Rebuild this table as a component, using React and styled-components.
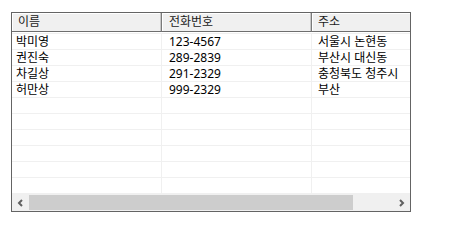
import React from "react";
import styled, { createGlobalStyle } from "styled-components";

const Global = createGlobalStyle`
  html, body { margin: 0; padding: 0; background: #ffffff; }
  body { font-family: "Noto Sans", "Noto Sans CJK KR", sans-serif; }
`;

const Page = styled.div`
  padding: 12px 0 0 11px;
`;

const ListView = styled.div`
  width: 400px;
  height: 200px;
  box-sizing: border-box;
  border: 1px solid #646464;
  background: #ffffff;
  display: flex;
  flex-direction: column;
  overflow: hidden;
`;

const Viewport = styled.div`
  flex: 1;
  overflow: hidden;
  display: flex;
  flex-direction: column;
`;

const HeaderRow = styled.div`
  width: 450px;
  display: grid;
  grid-template-columns: 150px 150px 150px;
  flex: none;
`;

const Body = styled.div`
  width: 450px;
  display: grid;
  grid-template-columns: 150px 150px 150px;
  padding-top: 1px;
`;

const HeaderCell = styled.div`
  height: 19px;
  box-sizing: border-box;
  background: #f0f0f0;
  border-bottom: 1px solid #6e6e6e;
  border-right: 1px solid #7a7a7a;
  box-shadow: inset -1px 0 0 #c8c8c8, inset 1px 1px 0 #ffffff;
  padding-left: ${(p) => p.$pad}px;
  font-size: 12px;
  line-height: 18px;
  color: #1a1a1a;
  white-space: nowrap;
`;

const Cell = styled.div`
  height: ${(p) => (p.$first ? 17 : 16)}px;
  box-sizing: border-box;
  border-top: ${(p) => (p.$first ? "1px solid #f0f0f0" : "none")};
  border-bottom: 1px solid #f0f0f0;
  border-right: 1px solid #f0f0f0;
  padding-left: ${(p) => p.$pad}px;
  font-size: 12px;
  line-height: 15px;
  color: #000000;
  white-space: nowrap;
  overflow: hidden;
`;

const ScrollBar = styled.div`
  height: 17px;
  flex: none;
  background: #f0f0f0;
  display: flex;
  align-items: stretch;
`;

const Arrow = styled.div`
  width: 17px;
  display: flex;
  align-items: center;
  justify-content: center;
`;

const Track = styled.div`
  flex: 1;
  display: flex;
  padding: 1px 0;
`;

const Thumb = styled.div`
  background: #cdcdcd;
  height: 100%;
`;

const Chevron = ({ dir }) => (
  <svg width="7" height="8" viewBox="0 0 7 8">
    <polyline
      points={dir === "left" ? "5,1 2,4 5,7" : "2,1 5,4 2,7"}
      fill="none"
      stroke="#606060"
      strokeWidth="2"
    />
  </svg>
);

const columns = [
  { title: "이름", hpad: 6, pad: 4 },
  { title: "전화번호", hpad: 7, pad: 7 },
  { title: "주소", hpad: 6, pad: 6 },
];

const rows = [
  ["박미영", "123-4567", "서울시 논현동"],
  ["권진숙", "289-2839", "부산시 대신동"],
  ["차길상", "291-2329", "충청북도 청주시"],
  ["허만상", "999-2329", "부산"],
  ["", "", ""],
  ["", "", ""],
  ["", "", ""],
  ["", "", ""],
  ["", "", ""],
  ["", "", ""],
  ["", "", ""],
];

export default function App() {
  return (
    <Page>
      <Global />
      <ListView>
        <Viewport>
          <HeaderRow>
            {columns.map((c) => (
              <HeaderCell key={c.title} $pad={c.hpad}>
                {c.title}
              </HeaderCell>
            ))}
          </HeaderRow>
          <Body>
            {rows.map((r, i) =>
              r.map((v, j) => (
                <Cell key={i + "-" + j} $pad={columns[j].pad} $first={i === 0}>
                  {v}
                </Cell>
              ))
            )}
          </Body>
        </Viewport>
        <ScrollBar>
          <Arrow>
            <Chevron dir="left" />
          </Arrow>
          <Track>
            <Thumb style={{ width: "324px" }} />
          </Track>
          <Arrow>
            <Chevron dir="right" />
          </Arrow>
        </ScrollBar>
      </ListView>
    </Page>
  );
}
